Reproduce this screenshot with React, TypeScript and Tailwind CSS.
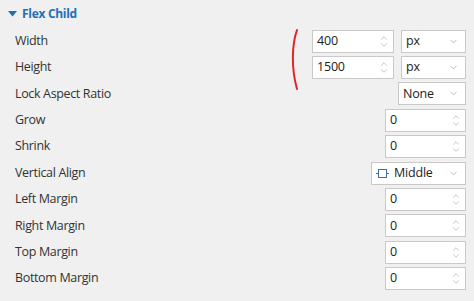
import { ChevronDown, ChevronUp } from "lucide-react";

const font = { fontFamily: '"Open Sans", "Noto Sans", sans-serif' };

function Spin({ value, w = "w-[81px]" }: { value: string; w?: string }) {
  return (
    <div className={`${w} h-[23px] bg-white border border-[#c9c9c9] flex items-center justify-between pl-[4px] pr-[4px]`}>
      <span className="text-[12.5px] tracking-[-0.2px] text-[#222]">{value}</span>
      <div className="flex flex-col items-center -space-y-[3px] text-[#8a8a8a]">
        <ChevronUp size={10} strokeWidth={1.2} />
        <ChevronDown size={10} strokeWidth={1.2} />
      </div>
    </div>
  );
}

function Select({ value, w, icon }: { value: string; w: string; icon?: boolean }) {
  return (
    <div className={`${w} h-[23px] bg-white border border-[#c9c9c9] flex items-center justify-between pl-[4px] pr-[6px]`}>
      <div className="flex items-center gap-[5px]">
        {icon && (
          <svg width="13" height="11" viewBox="0 0 13 11">
            <rect x="2.5" y="1.5" width="8" height="8" fill="none" stroke="#3b6ea5" strokeWidth="1" />
            <line x1="0" y1="5.5" x2="2.5" y2="5.5" stroke="#3b6ea5" strokeWidth="1" />
            <line x1="10.5" y1="5.5" x2="13" y2="5.5" stroke="#3b6ea5" strokeWidth="1" />
          </svg>
        )}
        <span className="text-[12.5px] tracking-[-0.2px] text-[#222]">{value}</span>
      </div>
      <ChevronDown size={11} strokeWidth={1.2} className="text-[#8a8a8a]" />
    </div>
  );
}

function Row({ label, children }: { label: string; children: React.ReactNode }) {
  return (
    <div className="h-[26.4px] flex items-center justify-between pl-[15px] pr-[8px]">
      <span className="text-[12.5px] tracking-[-0.35px] text-[#333]">{label}</span>
      <div className="flex items-center gap-[7px]">{children}</div>
    </div>
  );
}

export default function App() {
  return (
    <div className="w-[474px] h-[301px] bg-[#f0f0f0] relative overflow-hidden" style={font}>
      <div className="h-[28px] flex items-center pl-[8px] gap-[5px]">
        <svg width="9" height="6" viewBox="0 0 9 6">
          <polygon points="0,0 9,0 4.5,5.5" fill="#1f6fb5" />
        </svg>
        <span className="text-[12px] font-bold tracking-[-0.3px] text-[#1f6fb5]">Flex Child</span>
      </div>
      <Row label="Width">
        <Spin value="400" w="w-[82px]" />
        <Select value="px" w="w-[65px]" />
      </Row>
      <Row label="Height">
        <Spin value="1500" w="w-[82px]" />
        <Select value="px" w="w-[65px]" />
      </Row>
      <Row label="Lock Aspect Ratio">
        <Select value="None" w="w-[68px]" />
      </Row>
      <Row label="Grow">
        <Spin value="0" />
      </Row>
      <Row label="Shrink">
        <Spin value="0" />
      </Row>
      <Row label="Vertical Align">
        <Select value="Middle" w="w-[95px]" icon />
      </Row>
      <Row label="Left Margin">
        <Spin value="0" />
      </Row>
      <Row label="Right Margin">
        <Spin value="0" />
      </Row>
      <Row label="Top Margin">
        <Spin value="0" />
      </Row>
      <Row label="Bottom Margin">
        <Spin value="0" />
      </Row>
      <svg className="absolute left-[288px] top-[28px]" width="14" height="64" viewBox="0 0 14 64">
        <path d="M9 2 C4 16, 3 40, 9 61" fill="none" stroke="#e2242a" strokeWidth="2" strokeLinecap="round" />
      </svg>
    </div>
  );
}
